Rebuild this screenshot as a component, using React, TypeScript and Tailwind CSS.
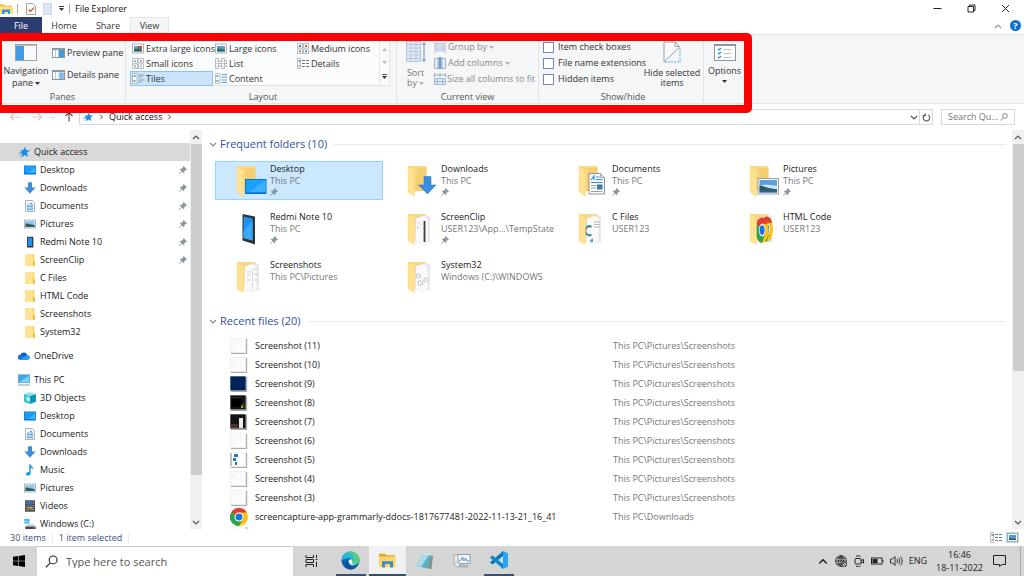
import React from 'react';

type IconProps = { className?: string };

/* ---------- small glyphs ---------- */

const Chevron: React.FC<IconProps & { dir?: 'up' | 'down' | 'right' }> = ({ className, dir = 'down' }) => {
    const d = { up: 'M1 6 4 3l3 3', down: 'M1 3l3 3 3-3', right: 'M3 1l3 3-3 3' }[dir];
    return (
        <svg viewBox="0 0 8 8" className={className} fill="none" stroke="currentColor" strokeWidth="1.2">
            <path d={d} />
        </svg>
    );
};

const Caret: React.FC<IconProps> = ({ className = 'text-[#333]' }) => (
    <svg viewBox="0 0 5 3" className={`inline-block h-[3px] w-[5px] shrink-0 ${className}`} fill="currentColor">
        <path d="M0 0h5L2.500 3z" />
    </svg>
);

const Pin: React.FC<IconProps> = ({ className }) => (
    <svg viewBox="0 0 8 8" className={className} fill="#8a979f">
        <path d="M4.600 0 8 3.400 7.200 4 6.700 3.900 5.200 5.400 5.300 6.700 4.700 7.200 3 5.500.4 8 0 7.600 2.500 5 .8 3.300 1.400 2.700 2.700 2.800 4.200 1.300 4 .7z" />
    </svg>
);

const Star: React.FC<IconProps> = ({ className }) => (
    <svg viewBox="0 0 12 12" className={className} fill="#1e8fe0">
        <path d="M7 .5 8.200 4l3.700.2L9 6.800l1 4L6.600 8.900 3.200 11.500l.9-4H.6l3.100-2.100L2 4.200l3.500-.2z" />
        <path d="M0 7.800h3M.8 9.500h2" stroke="#7cc0f0" strokeWidth=".7" />
    </svg>
);

const Magnifier: React.FC<IconProps> = ({ className }) => (
    <svg viewBox="0 0 12 12" className={className} fill="none" stroke="currentColor">
        <circle cx="7.500" cy="4.500" r="3.600" />
        <path d="M5 7.200.8 11.300" />
    </svg>
);

/* ---------- tree icons ---------- */

const DesktopIcon = () => (
    <svg viewBox="0 0 12 12" className="size-3">
        <rect y="1.500" width="12" height="9" fill="#0a78d4" />
        <rect x=".6" y="2.100" width="10.800" height="7" fill="#1e9cf5" />
        <path d="M4 9.100 11.400 3v6.100z" fill="#3eb0ff" />
    </svg>
);

const DownloadIcon = () => (
    <svg viewBox="0 0 12 12" className="size-3">
        <path d="M4 .3h4v5.200h3.600L6 11.800.4 5.500H4z" fill="#3b8ede" />
    </svg>
);

const DocumentIcon = () => (
    <svg viewBox="0 0 12 12" className="size-3">
        <path d="M1.500.5h6.700l2.300 2.300v8.700h-9z" fill="#f3f5f6" stroke="#9aa3a9" strokeWidth=".8" />
        <path d="M3 5h2.200M6 3.500h2M6 5h3M3 6.600h6M3 8.200h2.500M6.500 8.200H9M3 9.700h6" stroke="#3a9bdc" strokeWidth=".9" />
    </svg>
);

const PictureIcon = () => (
    <svg viewBox="0 0 12 12" className="size-3">
        <rect x=".4" y="2" width="11.200" height="8" fill="#f5f7f9" stroke="#9aa6b2" strokeWidth=".8" />
        <rect x="1.500" y="3.100" width="9" height="5.800" fill="#8cc4f2" />
        <path d="M1.500 5.600c3-.4 5 1.200 9 1.300v2h-9z" fill="#2f5f63" />
    </svg>
);

const PhoneIcon = () => (
    <svg viewBox="0 0 12 12" className="size-3">
        <rect x="3" y=".8" width="6.400" height="10.600" rx=".6" fill="#2c3440" />
        <rect x="3.800" y="1.800" width="4.400" height="8.200" fill="#1e93ee" />
    </svg>
);

const FolderIcon = () => (
    <svg viewBox="0 0 12 12" className="size-3">
        <path d="M1 0h9.500v12H1z" fill="#f8d775" />
        <path d="M1 0h7.500v12H1z" fill="#ffe394" />
        <path d="M9 7h2v4.800H9z" fill="#eec04f" />
    </svg>
);

const OneDriveIcon = () => (
    <svg viewBox="0 0 12 12" className="size-3">
        <path d="M2.600 4.600A3.400 3.400 0 0 1 8.500 3.800L10 6.500 3 8z" fill="#0f5fb8" />
        <path d="M2.600 4.600a2.700 2.700 0 0 0 0 5.400h5L5 5.500z" fill="#1178d0" />
        <path d="M2 9.700 8.600 5c2-.2 3.400.8 3.400 2.600A2.400 2.400 0 0 1 9.600 10H2.800z" fill="#27a0f0" />
    </svg>
);

const ComputerIcon = () => (
    <svg viewBox="0 0 12 12" className="size-3">
        <rect x=".3" y=".8" width="11.400" height="8" fill="#3ba7ee" stroke="#6f8ea3" strokeWidth=".6" />
        <path d="M.8 8.400 11.200 1.300v7.100z" fill="#7bd0fb" />
        <path d="M0 11h12" stroke="#8d9ba6" strokeWidth="1" />
    </svg>
);

const CubeIcon = () => (
    <svg viewBox="0 0 12 12" className="size-3">
        <path d="M0 2 6 .3 12 2 6 3.900z" fill="#8be4ee" />
        <path d="M0 2l6 1.900V12L0 9.700z" fill="#2fc4d6" />
        <path d="M12 2 6 3.900V12l6-2.300z" fill="#1296b8" />
        <path d="M2.500 4.500 6 5.500v4L2.500 8.400z" fill="#c4f4f7" />
    </svg>
);

const MusicIcon = () => (
    <svg viewBox="0 0 12 12" className="size-3">
        <path d="M5.200.3h1.400c.3 2 3.300 2.700 2.800 6-.4-1.600-1.500-2-2.700-2.200v5.200c0 1.500-1.300 2.400-2.600 2.400S2 11 2 10c0-1.300 1.500-2.400 3.200-2z" fill="#18a0ee" />
    </svg>
);

const VideoIcon = () => (
    <svg viewBox="0 0 12 12" className="size-3">
        <rect x="1" y=".3" width="10" height="11.400" fill="#3b3f46" />
        <path d="M2.100 1v10.400M9.900 1v10.400" stroke="#c9ced4" strokeWidth=".9" strokeDasharray="1 1" />
        <rect x="3.300" y="1.200" width="5.400" height="4.300" fill="#4477c2" />
        <rect x="3.300" y="6.400" width="5.400" height="4.300" fill="#c5963c" />
        <path d="M3.300 5.500 6 3l2.700 2.500zM3.300 10.700 5.500 8l3.200 2.700z" fill="#35618d" />
    </svg>
);

const DriveIcon = () => (
    <svg viewBox="0 0 12 12" className="size-3">
        <path d="M.5 1h2.200v2H.5zM3.200 1h2.200v2H3.200zM.5 3.500h2.200v2H.5zM3.200 3.500h2.200v2H3.200z" fill="#17a9ea" />
        <path d="M3 6.500h7l1.500 2.300H1.500z" fill="#c2c8cc" />
        <rect x="1.300" y="8.600" width="10.400" height="2.600" fill="#3f454a" />
        <path d="M9 9.900h1.500" stroke="#5fe07d" />
    </svg>
);

/* ---------- folder tiles ---------- */

const TileFolder: React.FC<{ open?: boolean; children?: React.ReactNode }> = ({ open, children }) => (
    <svg viewBox="0 0 32 34" className="h-[34px] w-8">
        <path d="M1 2h18.500v25H1z" fill="#f9da80" />
        <path d="M10 4h9.500v23H8z" fill="#eec463" opacity=".5" />
        {open && (
            <>
                <path d="M14 5l9-1.500V28l-5 2z" fill="#e9e9e9" />
                <path d="M14 30.500h11l-4-4z" fill="#ececec" />
                <path d="M9 6l8-2.500 4 3.500v21.500l-5 4L8 29z" fill="#fafafa" stroke="#dcdcdc" strokeWidth=".5" />
            </>
        )}
        {children}
        <path d={open ? 'M1 2l6.500 4v26.500L1 29z' : 'M1 2l6.500 5v25.500L1 28z'} fill="#ffe190" stroke="#f3d27a" strokeWidth=".4" />
    </svg>
);

const chromeArcs = (
    <>
        <circle cx="12" cy="12" r="12" fill="#fbc116" />
        <path d="M12 12 1.600 6A12 12 0 0 1 22.400 6H12z" fill="#e33b2e" />
        <path d="M12 12 1.600 6A12 12 0 0 0 12 24l5.200-9z" fill="#2ba24c" />
        <circle cx="12" cy="12" r="6" fill="#fff" />
        <circle cx="12" cy="12" r="4.600" fill="#1a73e8" />
    </>
);

const TILE_ICONS: Record<string, React.ReactNode> = {
    Desktop: (
        <TileFolder>
            <rect x="9.500" y="15.500" width="20.500" height="14" fill="#19a0fb" stroke="#0875c9" />
            <path d="M13 28 29.500 16v12z" fill="#39b1ff" />
            <path d="M9.500 29h20.500" stroke="#0868b5" />
        </TileFolder>
    ),
    Downloads: (
        <TileFolder>
            <path d="M17 12.500h7V21h5L20.500 30 11.500 21H17z" fill="#3b8ede" stroke="#2877c6" strokeWidth=".5" />
        </TileFolder>
    ),
    Documents: (
        <TileFolder>
            <path d="M11 9.500h11.500l4 4V30H11z" fill="#fafafa" stroke="#85898c" strokeWidth=".9" />
            <path d="M22.500 9.500v4h4" fill="#dadada" stroke="#85898c" strokeWidth=".6" />
            <path d="M13 16l3-4v4M18 13h3.500M18 15.500h6.500M13 18.500h11.500" stroke="#2f94dc" strokeWidth="1.200" fill="none" />
            <path d="M13 21.500h5M13 24h5M13 27.500h11.500" stroke="#9da2a6" />
            <rect x="19" y="20.500" width="5.500" height="5" fill="#3e7aa8" />
        </TileFolder>
    ),
    Pictures: (
        <TileFolder>
            <rect x="9" y="14.500" width="20.500" height="15.500" fill="#fff" stroke="#9a9fa3" />
            <rect x="10.500" y="16" width="17.500" height="12.500" fill="#5d9fe3" />
            <path d="M10.500 21.500c5-1 8-1 17.500.5V25H10.500z" fill="#cfe5f7" />
            <path d="M10.500 21.500c4 .2 8 3 17.500 3.500v1H10.500z" fill="#2c5c46" />
            <path d="M10.500 25.500H28v3H10.500z" fill="#2e5f92" />
        </TileFolder>
    ),
    'Redmi Note 10': (
        <svg viewBox="0 0 32 34" className="h-[34px] w-8">
            <path d="M6.500 2 19 4.500v28L6.500 28.500z" fill="#30343a" />
            <path d="M7.500 4.500 16.500 6.500v22l-9-2.500z" fill="#1c93f0" />
            <path d="M7.500 19l9-10v19.500l-9-2.500z" fill="#3ba9fa" />
        </svg>
    ),
    ScreenClip: (
        <TileFolder open>
            <path d="M17.500 9v21" stroke="#3c3c3c" strokeWidth="1.800" />
            <path d="M11 10l3 3M11 14v3" stroke="#c0c8ce" />
        </TileFolder>
    ),
    'C Files': (
        <TileFolder open>
            <path d="M13.500 15a4 4.500 0 1 0 0 7.500" fill="none" stroke="#3d87a8" strokeWidth="2" />
            <path d="M16 10h6M16 12.500h6M16 15h6" stroke="#bbb" />
            <path d="M12 28l3-1.500V30l-2 .5z" fill="#3e9fd8" />
        </TileFolder>
    ),
    'HTML Code': (
        <TileFolder open>
            <g transform="translate(11.500 4.500) scale(.52 1.050)">{chromeArcs}</g>
            <g transform="translate(6.500 5.500) scale(.55 1.050)">{chromeArcs}</g>
        </TileFolder>
    ),
    Screenshots: (
        <TileFolder open>
            <path d="M11 12h4M11 15h3M11 20h4M18 9h3M18 14h4M18 20h3" stroke="#c5ccd2" />
            <path d="M16.500 8v22" stroke="#d4d4d4" strokeWidth=".8" />
        </TileFolder>
    ),
    System32: (
        <TileFolder open>
            <circle cx="11.500" cy="16" r="2" fill="none" stroke="#b3bac0" strokeWidth="1.200" strokeDasharray="1.500 .6" />
            <circle cx="13.500" cy="23" r="2.200" fill="none" stroke="#b3bac0" strokeWidth="1.200" strokeDasharray="1.500 .6" />
            <circle cx="18.500" cy="20" r="1.800" fill="none" stroke="#bdc3c8" strokeWidth="1.200" strokeDasharray="1.500 .6" />
        </TileFolder>
    ),
};

const ChromeLogo: React.FC<IconProps> = ({ className }) => (
    <svg viewBox="0 0 24 24" className={className}>{chromeArcs}</svg>
);

/* ---------- data ---------- */

interface TreeItem {
    label: string;
    icon: React.ReactNode;
    pinned?: boolean;
}

const quickAccess: TreeItem[] = [
    { label: 'Desktop', icon: <DesktopIcon />, pinned: true },
    { label: 'Downloads', icon: <DownloadIcon />, pinned: true },
    { label: 'Documents', icon: <DocumentIcon />, pinned: true },
    { label: 'Pictures', icon: <PictureIcon />, pinned: true },
    { label: 'Redmi Note 10', icon: <PhoneIcon />, pinned: true },
    { label: 'ScreenClip', icon: <FolderIcon />, pinned: true },
    { label: 'C Files', icon: <FolderIcon /> },
    { label: 'HTML Code', icon: <FolderIcon /> },
    { label: 'Screenshots', icon: <FolderIcon /> },
    { label: 'System32', icon: <FolderIcon /> },
];

const thisPc: TreeItem[] = [
    { label: '3D Objects', icon: <CubeIcon /> },
    { label: 'Desktop', icon: <DesktopIcon /> },
    { label: 'Documents', icon: <DocumentIcon /> },
    { label: 'Downloads', icon: <DownloadIcon /> },
    { label: 'Music', icon: <MusicIcon /> },
    { label: 'Pictures', icon: <PictureIcon /> },
    { label: 'Videos', icon: <VideoIcon /> },
    { label: 'Windows (C:)', icon: <DriveIcon /> },
];

const folders = [
    { name: 'Desktop', path: 'This PC', pinned: true, selected: true },
    { name: 'Downloads', path: 'This PC', pinned: true },
    { name: 'Documents', path: 'This PC', pinned: true },
    { name: 'Pictures', path: 'This PC', pinned: true },
    { name: 'Redmi Note 10', path: 'This PC', pinned: true },
    { name: 'ScreenClip', path: 'USER123\\App...\\TempState', pinned: true },
    { name: 'C Files', path: 'USER123' },
    { name: 'HTML Code', path: 'USER123' },
    { name: 'Screenshots', path: 'This PC\\Pictures' },
    { name: 'System32', path: 'Windows (C:)\\WINDOWS' },
];

const SHOTS = 'This PC\\Pictures\\Screenshots';
const recent = [
    { name: 'Screenshot (11)', path: SHOTS, thumb: 'light' },
    { name: 'Screenshot (10)', path: SHOTS, thumb: 'light' },
    { name: 'Screenshot (9)', path: SHOTS, thumb: 'navy' },
    { name: 'Screenshot (8)', path: SHOTS, thumb: 'black' },
    { name: 'Screenshot (7)', path: SHOTS, thumb: 'window' },
    { name: 'Screenshot (6)', path: SHOTS, thumb: 'light' },
    { name: 'Screenshot (5)', path: SHOTS, thumb: 'blue' },
    { name: 'Screenshot (4)', path: SHOTS, thumb: 'light' },
    { name: 'Screenshot (3)', path: SHOTS, thumb: 'light' },
    { name: 'screencapture-app-grammarly-ddocs-1817677481-2022-11-13-21_16_41', path: 'This PC\\Downloads', thumb: 'chrome' },
];

const Thumb: React.FC<{ kind: string }> = ({ kind }) => {
    if (kind === 'chrome') return <ChromeLogo className="size-[18px]" />;
    const dark = kind === 'navy' || kind === 'black' || kind === 'window';
    return (
        <svg viewBox="0 0 18 16" className="h-4 w-[18px]">
            <path d="M1 15.300h15.500V1" fill="none" stroke="#ababab" strokeWidth="1.300" />
            <rect x=".3" y=".3" width="15.400" height="14.200" fill={kind === 'navy' ? '#012456' : dark ? '#141414' : '#fdfdfd'} stroke={dark ? 'none' : '#e6e6e6'} strokeWidth=".6" />
            {kind === 'light' && <path d="M2 3h3M7 3h5M2 5.500h2M7 6h1M11 5v5M4 3v8" stroke="#e6ebf1" strokeWidth=".7" />}
            {kind === 'black' && (
                <>
                    <path d="M1.500 3h10v9h-10z" fill="#000" />
                    <path d="M1.500 3h10" stroke="#555" strokeWidth=".5" />
                    <path d="M11 10.500h2v2.500h-2z" fill="#7ac21c" />
                    <path d="M13 8l1.500 5" stroke="#9a5a2a" strokeWidth=".6" />
                </>
            )}
            {kind === 'window' && <><path d="M9 4h4v10H9z" fill="#e8e8e8" /><path d="M1 10h7v4H1z" fill="#4a3325" /></>}
            {kind === 'blue' && <><path d="M1 1v13" stroke="#444" strokeWidth=".6" /><path d="M4 2h4v3H4zM3 6h3v3H3zM5 10h2v3H5z" fill="#2478b8" /></>}
        </svg>
    );
};

/* ---------- ribbon ---------- */

const PaneIcon: React.FC<{ detail?: boolean }> = ({ detail }) => (
    <svg viewBox="0 0 13 10" className="h-[10px] w-[13px] shrink-0">
        <rect x=".5" y=".5" width="12" height="9" fill="#fff" stroke="#8e979d" />
        <path d="M.5 1.500h12" stroke="#8e979d" />
        <path d="M3.500 2v7" stroke="#a9cbe6" />
        <rect x="6.500" y="2" width="5.500" height="7" fill={detail ? '#b5d8f3' : '#3f9be2'} />
        {detail && <path d="M7.500 4h4M7.500 6h4M7.500 8h4" stroke="#3f9be2" />}
    </svg>
);

const ViewIcon: React.FC<{ kind: string }> = ({ kind }) => (
    <svg viewBox="0 0 12 11" className="h-[11px] w-3 shrink-0" fill="none">
        {(kind === 'xl' || kind === 'large') && (
            <>
                <rect x=".5" y="1" width="11" height="9" fill="#fff" stroke="#9aa3aa" strokeWidth=".8" />
                <rect x="2" y="3" width="8" height="5.500" fill="#5aa0e0" />
                <path d="M2 6c3-.5 5 .5 8 .7v1.800H2z" fill="#2f6a4a" />
                {kind === 'xl' && <path d="M6 3h4v3H6z" fill="#b0563e" />}
            </>
        )}
        {(kind === 'medium' || kind === 'small') && (
            <>
                <path d="M.5.500h5v4.500h-5zM6.500.500h5v4.500h-5zM.5 6h5v4.500h-5zM6.500 6h5v4.500h-5z" fill="#fff" stroke="#9aa3aa" strokeWidth=".7" />
                <path d="M2 2h2v2H2zM8 7.500h2v1.800H8z" fill={kind === 'small' ? '#9db6c8' : '#2f7fc2'} />
                <path d="M8 2h2v2H8zM2 7.500h2v1.800H2z" fill={kind === 'small' ? '#b5a59a' : '#c06a2d'} />
            </>
        )}
        {kind === 'list' && (
            <>
                <path d="M.5.500h3v10h-3zM6.500.500h3v10h-3z" fill="#fff" stroke="#9aa3aa" strokeWidth=".7" />
                <path d="M1.500 3h1M1.500 5.500h1M1.500 8h1M7.500 3h1M7.500 5.500h1M7.500 8h1" stroke="#c98f80" />
                <path d="M4.500 3h1M4.500 5.500h1M4.500 8h1M10.500 3H12M10.500 5.500H12M10.500 8H12" stroke="#6a7a86" />
            </>
        )}
        {(kind === 'details' || kind === 'content' || kind === 'tiles') && (
            <>
                <path d={kind === 'details' ? 'M.5.500h3v10h-3z' : 'M.5.500h4.500v10H.5z'} fill="#fff" stroke="#9aa3aa" strokeWidth=".7" />
                <path d="M1.500 3h2" stroke="#2f7fc2" strokeWidth="1.500" />
                <path d="M1.500 8h2" stroke={kind === 'details' ? '#c98f80' : '#4b8a3c'} strokeWidth="1.500" />
                {kind === 'details' && <path d="M5 2.500h3M9 2.500h3M5 5.500h3M9 5.500h3M5 8.500h3M9 8.500h3" stroke="#6a7a86" />}
                {kind === 'content' && <path d="M6.500 1.500H12M6.500 4H12M6.500 7H12M6.500 9.500H12" stroke="#5aa0e0" />}
                {kind === 'tiles' && <path d="M6.500 2H12M6.500 4H10M6.500 7H12M6.500 9H10" stroke="#7d8a94" strokeWidth=".8" />}
            </>
        )}
    </svg>
);

const layouts = [
    { kind: 'xl', label: 'Extra large icons' },
    { kind: 'large', label: 'Large icons' },
    { kind: 'medium', label: 'Medium icons' },
    { kind: 'small', label: 'Small icons' },
    { kind: 'list', label: 'List' },
    { kind: 'details', label: 'Details' },
    { kind: 'tiles', label: 'Tiles' },
    { kind: 'content', label: 'Content' },
];

const Group: React.FC<{ title?: string; className: string; children: React.ReactNode }> = ({ title, className, children }) => (
    <section className={`flex shrink-0 flex-col border-r border-[#e2e3e4] ${className}`}>
        <div className="flex h-14 overflow-hidden">{children}</div>
        <h2 className="text-center leading-3 text-[#555]">{title}</h2>
    </section>
);

const Ribbon = () => (
    <div className="flex h-[70px] border-y border-[#e3e5e7] bg-[#f4f6f8] text-[#333]">
        <Group title="Panes" className="w-[126px]">
            <button className="flex w-[52px] flex-col items-center pt-[9px] leading-3">
                <svg viewBox="0 0 22 17" className="mb-1 h-[17px] w-[22px] shrink-0">
                    <rect x=".5" y=".5" width="21" height="16" fill="#f8fafb" stroke="#9aa3a9" />
                    <path d="M1 1.500h20" stroke="#b9c0c5" />
                    <rect x="1" y="2" width="8" height="14" fill="#3f9be2" />
                </svg>
                Navigation
                <span className="flex items-center gap-[2px]">pane <Caret /></span>
            </button>
            <div className="flex flex-col gap-[10px] pt-3">
                <button className="flex items-center gap-[2px] leading-3"><PaneIcon />Preview pane</button>
                <button className="flex items-center gap-[2px] leading-3"><PaneIcon detail />Details pane</button>
            </div>
        </Group>

        <Group title="Layout" className="w-[271px] pl-1">
            <div className="flex h-[51px] border-b border-[#dfe1e3] bg-[#fbfcfd] pt-[6px]">
                <div className="grid auto-rows-[15px] grid-cols-[83px_82px_84px]">
                    {layouts.map((l) => (
                        <button
                            key={l.kind}
                            className={`flex items-center gap-[2px] border pl-px leading-3 whitespace-nowrap ${l.kind === 'tiles' ? 'border-[#90c1ee] bg-[#cce4fb]' : 'border-transparent'}`}
                        >
                            <ViewIcon kind={l.kind} />
                            {l.label}
                        </button>
                    ))}
                </div>
                <div className="flex w-[11px] flex-col items-center justify-between border-x border-[#e3e5e7] pt-[7px] pb-[6px]">
                    <Caret className="rotate-180 text-[#b5b9bd]" />
                    <Caret className="text-[#b5b9bd]" />
                    <span className="flex flex-col items-center gap-px border-t border-[#555] pt-px"><Caret /></span>
                </div>
            </div>
        </Group>

        <Group title="Current view" className="w-[142px]">
            <button className="flex w-[37px] flex-col items-center pt-[6px] leading-3 text-[#777]">
                <svg viewBox="0 0 20 22" className="mb-1 h-[22px] w-5 shrink-0">
                    <rect x=".5" y=".5" width="14" height="20" fill="#dfe8f3" stroke="#b8c6d8" />
                    <path d="M1 3.500h14M1 7h14M1 10.500h14M1 14h14M1 17.500h14M5 1v20M10 1v20" stroke="#b0c3dc" strokeWidth=".8" />
                    <path d="M18 2v18M16.500 4 18 1.500 19.500 4M16.500 18l1.500 2.500 1.500-2.500" fill="none" stroke="#6f8fb5" />
                </svg>
                <span className="h-[10px]">Sort</span>
                <span className="flex items-center gap-[2px]">by <Caret className="text-[#b0b0b0]" /></span>
            </button>
            <div className="flex flex-col gap-1 pt-[6px] text-[#888]">
                <button className="flex items-center gap-[2px] leading-3">
                    <svg viewBox="0 0 12 11" className="h-[11px] w-3"><path d="M1 0v11M11 0v11" stroke="#a9b9cc" /><rect x="2.500" y="1" width="7" height="8" fill="#cfdcec" stroke="#b3c2d5" strokeWidth=".6" /></svg>
                    Group by <Caret className="text-[#b0b0b0]" />
                </button>
                <button className="flex items-center gap-[2px] leading-3">
                    <svg viewBox="0 0 12 12" className="size-3"><path d="M.5 1.500h11v10H.5zM4 1.500v10M8 1.500v10" fill="#eaf0f7" stroke="#9db2cc" /><rect x="4.500" y="0" width="3" height="12" fill="#7c9fcb" /></svg>
                    Add columns <Caret className="text-[#b0b0b0]" />
                </button>
                <button className="flex items-center gap-px leading-3 whitespace-nowrap">
                    <svg viewBox="0 0 12 12" className="size-3 shrink-0"><path d="M.5 0v4M11.500 0v4M1 2h10M6 0v4" stroke="#8eabd0" /><path d="M.5 5.500h11v6H.5zM.5 8.500h11M3.500 5.500v6M8.500 5.500v6" fill="#e3ebf5" stroke="#8eabd0" strokeWidth=".8" /></svg>
                    Size all columns to fit
                </button>
            </div>
        </Group>

        <Group title="Show/hide" className="w-[165px] pl-1">
            <div className="flex w-[98px] flex-col gap-1 pt-[6px]">
                {['Item check boxes', 'File name extensions', 'Hidden items'].map((label) => (
                    <label key={label} className="flex items-center gap-1 leading-3 whitespace-nowrap">
                        <input type="checkbox" className="size-[11px] shrink-0 appearance-none border border-[#7088b0] bg-white" />
                        {label}
                    </label>
                ))}
            </div>
            <button className="flex w-[62px] flex-col items-center pt-[6px] leading-3 whitespace-nowrap">
                <svg viewBox="0 0 18 22" className="mb-1 h-[22px] w-[18px] shrink-0">
                    <path d="M1 21V1h11l4 4z" fill="#f8f9fa" />
                    <path d="M1 21V1h11l4.500 4.500V6L1 21" fill="none" stroke="#9a9fa4" />
                    <path d="M12 1v4.500h4.500" fill="none" stroke="#9a9fa4" />
                    <path d="M17 7v14H2" fill="none" stroke="#5aaae6" strokeDasharray="2 1" />
                </svg>
                <span className="h-[10px]">Hide selected</span>
                <span>items</span>
            </button>
        </Group>

        <div className="flex w-[41px] shrink-0 flex-col items-center">
            <button className="flex flex-col items-center pt-[9px] leading-3">
                <svg viewBox="0 0 22 17" className="mb-1 h-[17px] w-[22px]">
                    <rect x=".5" y=".5" width="21" height="16" fill="#fff" stroke="#8e959b" />
                    <path d="M1 1.500h20" stroke="#8e959b" />
                    <path d="M4 5l1 1 2-2M4 9l1 1 2-2M4 13l1 1 2-2" fill="none" stroke="#2f8bdc" strokeWidth="1.200" />
                    <path d="M9.500 5.500h8M9.500 9.500h8M9.500 13.500h8" stroke="#c0c4c8" />
                </svg>
                Options
                <Caret className="mt-[3px] text-[#333]" />
            </button>
        </div>
    </div>
);

/* ---------- panels ---------- */

const ScrollBar: React.FC<{ thumb: string }> = ({ thumb }) => (
    <div className="flex w-3 shrink-0 flex-col items-center bg-[#f0f0f0] text-[#555]">
        <Chevron dir="up" className="my-[3px] size-2 shrink-0" />
        <div className={`w-[11px] bg-[#cdcdcd] ${thumb}`} />
        <Chevron className="mt-auto mb-[3px] size-2 shrink-0" />
    </div>
);

const TreeRow: React.FC<{ item: TreeItem; root?: boolean; active?: boolean }> = ({ item, root, active }) => (
    <li>
        <a
            href="#"
            className={`flex h-[18px] items-center pr-[3px] ${root ? 'gap-1 pl-[18px]' : 'gap-1 pl-6'} ${active ? 'bg-[#d9d9d9]' : ''}`}
        >
            {item.icon}
            <span className="flex-1 whitespace-nowrap">{item.label}</span>
            {item.pinned && <Pin className="size-2" />}
        </a>
    </li>
);

const Sidebar = () => (
    <nav className="flex w-[202px] shrink-0 overflow-hidden">
        <ul className="min-w-0 flex-1 overflow-hidden pt-[13px]">
            <TreeRow root active item={{ label: 'Quick access', icon: <Star className="size-3" /> }} />
            {quickAccess.map((i) => <TreeRow key={i.label} item={i} />)}
            <li className="h-[6px]" />
            <TreeRow root item={{ label: 'OneDrive', icon: <OneDriveIcon /> }} />
            <li className="h-[6px]" />
            <TreeRow root item={{ label: 'This PC', icon: <ComputerIcon /> }} />
            {thisPc.map((i) => <TreeRow key={i.label} item={i} />)}
        </ul>
        <ScrollBar thumb="h-[83%]" />
    </nav>
);

const SectionTitle: React.FC<{ children: React.ReactNode }> = ({ children }) => (
    <h3 className="flex h-4 items-center gap-[3px] text-[11px] text-[#33509e]">
        <Chevron className="size-2 text-[#888]" />
        {children}
        <span className="ml-1 h-px flex-1 bg-[#e9e9e9]" />
    </h3>
);

const Content = () => (
    <main className="min-w-0 flex-1 overflow-hidden pt-[6px] pr-[6px] pl-[7px]">
        <SectionTitle>Frequent folders (10)</SectionTitle>
        <div className="mt-[9px] ml-[6px] grid grid-cols-[repeat(auto-fill,168px)] gap-x-[3px] gap-y-[9px]">
            {folders.map((f) => (
                <button
                    key={f.name}
                    className={`flex h-[39px] items-start border pl-5 text-left ${f.selected ? 'border-[#99d1ff] bg-[#cce8ff]' : 'border-transparent'}`}
                >
                    <span className="mt-[2px] mr-[2px] shrink-0">{TILE_ICONS[f.name]}</span>
                    <span className="flex flex-col pt-px leading-3 whitespace-nowrap">
                        <span>{f.name}</span>
                        <span className="text-[#777]">{f.path}</span>
                        {f.pinned && <Pin className="mt-px size-2" />}
                    </span>
                </button>
            ))}
        </div>
        <div className="h-[17px]" />
        <SectionTitle>Recent files (20)</SectionTitle>
        <table className="mt-[7px] ml-[21px] w-[780px] table-fixed">
            <tbody>
                {recent.map((r) => (
                    <tr key={r.name} className="h-[19px]">
                        <td className="w-[25px] p-0"><Thumb kind={r.thumb} /></td>
                        <td className="w-[358px] p-0 whitespace-nowrap">{r.name}</td>
                        <td className="p-0 text-[#777]">{r.path}</td>
                    </tr>
                ))}
                <tr>
                    <td className="p-0"><Thumb kind="light" /></td>
                </tr>
            </tbody>
        </table>
    </main>
);

/* ---------- window chrome ---------- */

const TitleBar = () => (
    <header className="flex h-[17px] items-center text-[#111]">
        <svg viewBox="0 0 13 12" className="h-3 w-[13px]">
            <path d="M0 1h4l1 1.500h7V11H0z" fill="#f6cd5b" />
            <path d="M0 4h13v7H0z" fill="#ffdf85" />
            <path d="M2 11V6.500h8V11H8V9H4.500v2z" fill="#3d8fd6" />
        </svg>
        <span className="mx-1 h-[10px] w-px bg-[#aaa]" />
        <svg viewBox="0 0 10 12" className="ml-1 h-3 w-[10px]">
            <path d="M.5.500h6l3 3v8h-9z" fill="#fdfdfd" stroke="#8d8d8d" strokeWidth=".8" />
            <path d="M2.500 6.500l2 2L8 4.500" fill="none" stroke="#e2572b" strokeWidth="1.300" />
        </svg>
        <span className="ml-[7px] h-3 w-[9px] border border-[#cbd8ee] bg-[#dbe6f7]" />
        <span className="ml-[7px] flex w-[5px] flex-col gap-px">
            <span className="h-px bg-[#333]" />
            <Caret />
        </span>
        <span className="mx-[5px] h-[10px] w-px bg-[#aaa]" />
        <h1>File Explorer</h1>
        <div className="ml-auto flex items-center gap-[25px] pr-[14px]">
            <button aria-label="Minimize"><svg viewBox="0 0 9 9" className="size-[9px]" stroke="#222"><path d="M.5 4.500h8" /></svg></button>
            <button aria-label="Restore"><svg viewBox="0 0 9 9" className="size-[9px]" fill="none" stroke="#222"><path d="M1 2.500h5.500V8H1zM2.500 2.500V1H8v5.500H6.500" /></svg></button>
            <button aria-label="Close"><svg viewBox="0 0 9 9" className="size-[9px]" stroke="#222"><path d="M1 1l7 7M8 1 1 8" /></svg></button>
        </div>
    </header>
);

const Tabs = () => (
    <div className="flex h-[17px] items-stretch text-[#333]">
        <button className="w-[42px] bg-[#2b3d70] text-white">File</button>
        <button className="w-11">Home</button>
        <button className="w-11">Share</button>
        <button className="w-[39px] border-x border-t border-[#e3e5e7] bg-[#f4f6f8]">View</button>
        <div className="ml-auto flex items-center gap-2 pr-[3px]">
            <Chevron dir="up" className="size-2 text-[#999]" />
            <button aria-label="Help" className="size-[11px] rounded-full bg-[#0a72cf] text-[9px] leading-[11px] font-bold text-white">?</button>
        </div>
    </div>
);

const Arrow: React.FC<{ d: string; className: string }> = ({ d, className }) => (
    <svg viewBox="0 0 10 10" className={`size-[10px] ${className}`} fill="none" stroke="currentColor" strokeWidth="1.100"><path d={d} /></svg>
);

const AddressBar = () => (
    <div className="flex h-[26px] items-center pr-[9px] pl-[10px]">
        <button aria-label="Back"><Arrow d="M9.500 5h-9M4 1.500.5 5 4 8.500" className="text-[#ccc]" /></button>
        <button aria-label="Forward" className="ml-3"><Arrow d="M.5 5h9M6 1.500 9.500 5 6 8.500" className="text-[#ccc]" /></button>
        <Chevron className="ml-2 size-[6px] text-[#ccc]" />
        <button aria-label="Up" className="ml-2"><Arrow d="M5 9.500v-9M1.500 4 5 .5 8.500 4" className="text-[#444]" /></button>
        <div className="ml-[5px] flex h-4 flex-1 items-center border border-[#d9d9d9]">
            <Star className="ml-[3px] size-[10px]" />
            <Chevron dir="right" className="ml-[5px] size-[6px] text-[#333]" />
            <span className="mr-1 ml-[5px] text-[#111]">Quick access</span>
            <Chevron dir="right" className="size-[6px] text-[#333]" />
            <Chevron className="mr-px ml-auto size-2 text-[#555]" />
            <button aria-label="Refresh" className="flex h-full w-[13px] items-center justify-center border-l border-[#d9d9d9]">
                <svg viewBox="0 0 10 10" className="size-[9px]" fill="none" stroke="#555" strokeWidth="1.200">
                    <path d="M3 2.200A3.600 3.600 0 1 0 7 2.200M3.500.200V2.900H.8" />
                </svg>
            </button>
        </div>
        <label className="ml-2 flex h-4 w-[74px] items-center gap-[2px] border border-[#d9d9d9] px-[6px] text-[#555]">
            <input type="text" aria-label="Search Quick access" placeholder="Search Qu..." className="w-0 flex-1 outline-none placeholder:text-[#777]" />
            <Magnifier className="size-2 shrink-0" />
        </label>
    </div>
);

const StatusBar = () => (
    <footer className="flex h-[17px] items-center pr-[5px] pl-[10px] text-[#3b4f7a]">
        <span className="border-r border-[#eee] pr-[6px] leading-3">30 items</span>
        <span className="border-r border-[#eee] px-[6px] leading-3">1 item selected</span>
        <div className="ml-auto flex items-center gap-1">
            <button aria-label="Details view"><ViewIcon kind="details" /></button>
            <button aria-label="Large icons view" className="border border-[#b8dcf7]">
                <svg viewBox="0 0 11 9" className="h-[9px] w-[11px]"><rect x=".5" y=".5" width="10" height="8" fill="#fff" stroke="#aaa" /><rect x="2" y="2" width="7" height="5" fill="#4b9be0" /><path d="M2 5l7 1v1H2z" fill="#2f5f50" /></svg>
            </button>
        </div>
    </footer>
);

const TaskButton: React.FC<{ label: string; running?: boolean; active?: boolean; children: React.ReactNode }> = ({ label, running, active, children }) => (
    <button aria-label={label} className={`flex h-full w-[37px] flex-col items-center ${active ? 'bg-[#f1f1f1]' : ''}`}>
        <span className="flex flex-1 items-center">{children}</span>
        {running && <span className={`h-[2px] bg-[#3a4f6e] ${active ? 'w-full' : 'w-[30px]'}`} />}
    </button>
);

const Taskbar = () => (
    <div className="flex h-[30px] shrink-0 items-center bg-[#d5d5d5] text-[#222]">
        <button aria-label="Start" className="flex h-full w-[37px] items-center justify-center">
            <svg viewBox="0 0 12 12" className="size-3"><path d="M0 1.700l5-.7v4.700H0zM5.600.900 12 0v5.700H5.600zM0 6.300h5V11l-5-.7zM5.600 6.300H12V12l-6.400-.9z" fill="#000" /></svg>
        </button>
        <label className="flex h-full w-64 items-center gap-2 border-t border-[#ccc] bg-white px-2">
            <Magnifier className="size-[13px]" />
            <input type="text" aria-label="Search" placeholder="Type here to search" className="w-0 flex-1 text-[11px] outline-none placeholder:text-[#555]" />
        </label>
        <TaskButton label="Task view">
            <svg viewBox="0 0 13 12" className="h-3 w-[13px]" fill="none" stroke="#222"><path d="M1 0v2.500h7.500V0M1 12V9.500h7.500V12M1 4.500h7.500v3H1zM11.500 0v3M11.500 6.500V12M10.500 4.500h2" /></svg>
        </TaskButton>
        <div className="ml-[2px] flex h-full">
            <TaskButton label="Edge" running>
                <svg viewBox="0 0 20 20" className="size-[19px]">
                    <circle cx="10" cy="10" r="9.500" fill="#0d64b4" />
                    <path d="M.6 9A9.500 9.500 0 0 1 19.500 9.500c0 3-2.300 4.700-5 4.700-2.500 0-3-1-2.500-2 .8-1.600-.5-4.500-4-4.500C4.500 7.700 1.500 9.800.6 9z" fill="#2bb7dc" />
                    <path d="M10 .5a9.500 9.500 0 0 1 9.500 9c0 3-2.300 4.700-5 4.700-1.500 0-2.500-.4-2.600-1.200C16 9 14 3 6 1.400z" fill="#55cf7c" />
                    <path d="M7.500 9c-2 5 2 9.500 8.500 8A9.500 9.500 0 0 1 10 19.500C3 18 3 11 7.500 9z" fill="#134d92" />
                    <path d="M8.500 9.200c2-1.700 4.500.8 3.500 3-.6 1.600 1 2.200 3.500 2-3.500 2.500-9-.8-7-5z" fill="#e8f2f7" />
                </svg>
            </TaskButton>
            <TaskButton label="File Explorer" running active>
                <svg viewBox="0 0 17 15" className="h-[15px] w-[17px]">
                    <path d="M0 .8h6l1.300 1.500H16V13H0z" fill="#e2a62b" />
                    <path d="M0 3.500h16.500V14H0z" fill="#ffd661" />
                    <path d="M3 14.500V8.300h11v6.200h-3V11H6v3.500z" fill="#3c8bd2" />
                </svg>
            </TaskButton>
            <TaskButton label="Notepad">
                <svg viewBox="0 0 18 17" className="h-[17px] w-[18px]">
                    <path d="M13 1.500 17 3l-1.500 13-4-.5z" fill="#8b8f80" />
                    <path d="M6.500 1 16 2l-4.500 13.500L.5 13z" fill="#58b0c4" />
                    <path d="M6.500 1 13 1.700 5 14 .5 13z" fill="#a6dbe4" />
                    <path d="M6.500.800 16 1.900" stroke="#e9e9e9" />
                </svg>
            </TaskButton>
            <TaskButton label="Resource Monitor">
                <svg viewBox="0 0 18 16" className="h-4 w-[18px]">
                    <path d="M1 2h9v9H1z" fill="#eceef0" stroke="#999" strokeWidth=".7" />
                    <rect x="5" y="1.500" width="12" height="9" fill="#f5f8fb" stroke="#8e959b" strokeWidth=".9" />
                    <path d="M6 8l2-1 1.500-3L11 8l1.500-3 1.500 3h2" fill="none" stroke="#3d84c9" strokeWidth=".9" />
                    <path d="M3 12h11l2 2.500H6z" fill="#b0b4b8" />
                    <circle cx="4" cy="11.500" r="2.500" fill="#e8e8e8" stroke="#999" strokeWidth=".6" />
                </svg>
            </TaskButton>
            <TaskButton label="Visual Studio Code" running>
                <svg viewBox="0 0 18 18" className="size-[18px]">
                    <path d="M13 0l5 2.200v13.600L13 18z" fill="#2aa4ee" />
                    <path d="M13 0v5L2.500 13.500 0 11.600z" fill="#0a75bd" />
                    <path d="M13 18v-5L2.500 4.500 0 6.400z" fill="#0f84cf" />
                </svg>
            </TaskButton>
        </div>
        <div className="ml-auto flex items-center gap-[6px]">
            <Chevron dir="up" className="size-[10px]" />
            <svg viewBox="0 0 12 12" className="ml-px size-3" fill="none" stroke="currentColor" strokeWidth=".9">
                <circle cx="6" cy="6" r="5.300" /><path d="M.7 6h10M6 .7v10.600M1.500 3h9M1.500 9H7M6 .7c-3.300 3-3.300 7.600 0 10.600M6 .7c2 2 2.500 4 2.300 6" /><circle cx="9.300" cy="9.300" r="2.300" fill="#d5d5d5" /><path d="M7.800 7.800l3 3" />
            </svg>
            <svg viewBox="0 0 12 12" className="size-3" fill="none" stroke="currentColor"><rect x="2" y="3.500" width="6" height="5.500" rx="1" /><path d="M8 5.500l2.500-1v3.500L8 7M3 1.500c1.500-1 3-1 4.500 0M3 11c1.500 1 3 1 4.500 0" /></svg>
            <svg viewBox="0 0 13 8" className="h-2 w-[13px]" fill="none" stroke="currentColor"><rect x=".5" y="1" width="10.500" height="6" /><path d="M12 3v2" /><rect x="2" y="2.500" width="4" height="3" fill="currentColor" /></svg>
            <svg viewBox="0 0 13 12" className="h-3 w-[13px]" fill="none" stroke="currentColor" strokeWidth=".9"><path d="M.5 4h2L5 1.500v9L2.500 8h-2zM6.800 4c.8 1 .8 3 0 4M8.600 2.800c1.500 1.800 1.500 4.600 0 6.400M10.400 1.500c2.300 2.500 2.300 6.500 0 9" /></svg>
            <span>ENG</span>
            <div className="mx-[3px] text-center leading-[13px]">
                <div>16:46</div>
                <div>18-11-2022</div>
            </div>
            <button aria-label="Notifications" className="ml-px">
                <svg viewBox="0 0 13 12" className="h-3 w-[13px]" fill="none" stroke="currentColor"><path d="M.5.500h12v9H9L6.500 11.500V9.500h-6z" /></svg>
            </button>
            <span className="ml-2 h-[30px] w-1 border-l border-[#aaa]" />
        </div>
    </div>
);

export default function App() {
    return (
        <div className="flex h-screen flex-col overflow-hidden bg-white font-['Open_Sans','Noto_Sans',sans-serif] text-[9px] leading-3 text-[#1a1a1a]">
            <TitleBar />
            <Tabs />
            <div className="relative shrink-0">
                <Ribbon />
                <div className="pointer-events-none absolute -top-px -bottom-[9px] -left-[6px] w-[758px] rounded-[5px] border-8 border-[#fe0000]" />
            </div>
            <AddressBar />
            <div className="flex min-h-0 flex-1">
                <Sidebar />
                <Content />
                <ScrollBar thumb="h-[57%]" />
            </div>
            <StatusBar />
            <Taskbar />
        </div>
    );
}
